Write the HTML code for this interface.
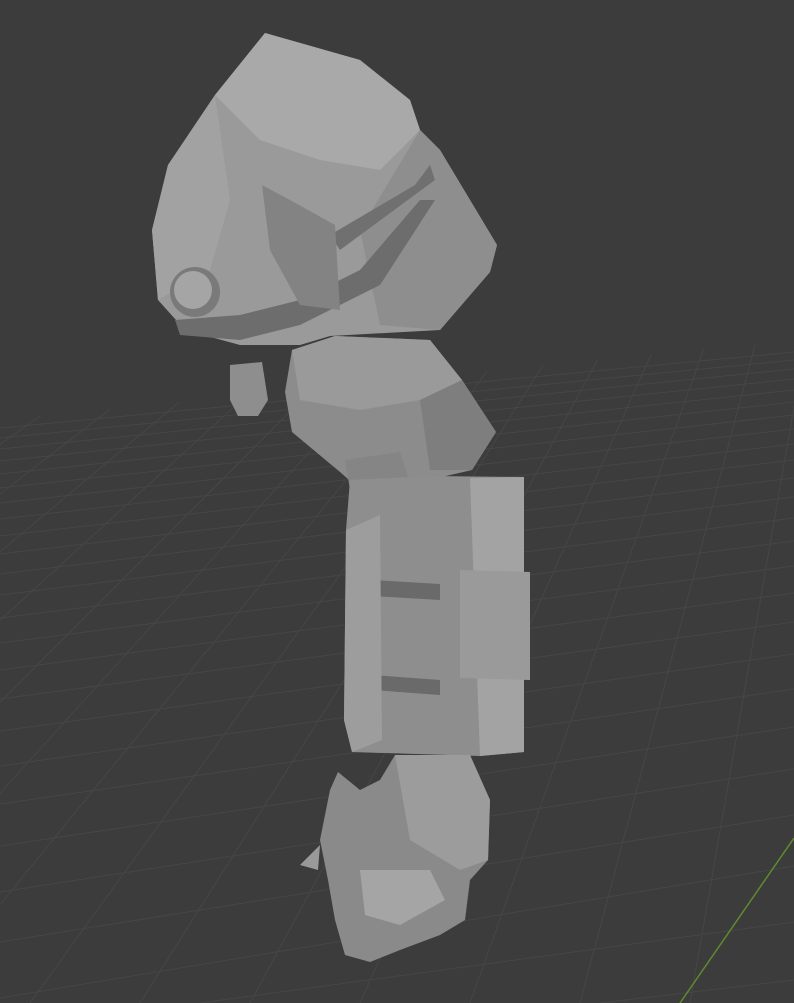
<!DOCTYPE html>
<html><head><meta charset="utf-8"><style>html,body{margin:0;padding:0;background:#3d3d3d;}svg{display:block}</style></head>
<body>
<svg width="794" height="1003" viewBox="0 0 794 1003" xmlns="http://www.w3.org/2000/svg">
<defs>
<clipPath id="floor"><polygon points="0,420 794,340 794,1003 0,1003"/></clipPath>
</defs>
<rect width="794" height="1003" fill="#3c3c3c"/>
<g clip-path="url(#floor)" stroke="#464646" stroke-width="1" fill="none">
<line x1="0" y1="428" x2="794" y2="352"/><line x1="0" y1="438" x2="794" y2="360"/>
<line x1="0" y1="449" x2="794" y2="369"/><line x1="0" y1="461" x2="794" y2="379"/>
<line x1="0" y1="474" x2="794" y2="390"/><line x1="0" y1="488" x2="794" y2="402"/>
<line x1="0" y1="503" x2="794" y2="415"/><line x1="0" y1="519" x2="794" y2="429"/>
<line x1="0" y1="536" x2="794" y2="444"/><line x1="0" y1="554" x2="794" y2="460"/>
<line x1="0" y1="574" x2="794" y2="478"/><line x1="0" y1="595" x2="794" y2="497"/>
<line x1="0" y1="618" x2="794" y2="518"/><line x1="0" y1="643" x2="794" y2="541"/>
<line x1="0" y1="670" x2="794" y2="566"/><line x1="0" y1="699" x2="794" y2="593"/>
<line x1="0" y1="731" x2="794" y2="622"/><line x1="0" y1="766" x2="794" y2="654"/>
<line x1="0" y1="804" x2="794" y2="689"/><line x1="0" y1="846" x2="794" y2="727"/>
<line x1="0" y1="892" x2="794" y2="769"/><line x1="0" y1="942" x2="794" y2="815"/>
<line x1="0" y1="998" x2="794" y2="866"/><line x1="200" y1="1003" x2="794" y2="922"/>
<line x1="600" y1="1003" x2="794" y2="980"/>
<g>
<line x1="900" y1="-200" x2="-1500" y2="1003"/><line x1="900" y1="-200" x2="-1350" y2="1003"/>
<line x1="900" y1="-200" x2="-1200" y2="1003"/><line x1="900" y1="-200" x2="-1050" y2="1003"/>
<line x1="900" y1="-200" x2="-900" y2="1003"/><line x1="900" y1="-200" x2="-780" y2="1003"/>
<line x1="900" y1="-200" x2="-660" y2="1003"/><line x1="900" y1="-200" x2="-540" y2="1003"/>
<line x1="900" y1="-200" x2="-420" y2="1003"/><line x1="900" y1="-200" x2="-300" y2="1003"/>
<line x1="900" y1="-200" x2="-190" y2="1003"/><line x1="900" y1="-200" x2="-80" y2="1003"/>
<line x1="900" y1="-200" x2="30" y2="1003"/><line x1="900" y1="-200" x2="140" y2="1003"/>
<line x1="900" y1="-200" x2="250" y2="1003"/><line x1="900" y1="-200" x2="360" y2="1003"/>
<line x1="900" y1="-200" x2="470" y2="1003"/><line x1="900" y1="-200" x2="580" y2="1003"/>
<line x1="900" y1="-200" x2="690" y2="1003"/><line x1="900" y1="-200" x2="800" y2="1003"/>
<line x1="900" y1="-200" x2="910" y2="1003"/><line x1="900" y1="-200" x2="1020" y2="1003"/>
<line x1="900" y1="-200" x2="1130" y2="1003"/><line x1="900" y1="-200" x2="1240" y2="1003"/>
<line x1="900" y1="-200" x2="1360" y2="1003"/><line x1="900" y1="-200" x2="1480" y2="1003"/>
<line x1="900" y1="-200" x2="1600" y2="1003"/><line x1="900" y1="-200" x2="1740" y2="1003"/>
<line x1="900" y1="-200" x2="1880" y2="1003"/><line x1="900" y1="-200" x2="2040" y2="1003"/>
<line x1="900" y1="-200" x2="2200" y2="1003"/><line x1="900" y1="-200" x2="2400" y2="1003"/>
</g>
</g>
<line x1="680" y1="1003" x2="794" y2="838" stroke="#5f8a2e" stroke-width="1.5"/>

<!-- stub -->
<path d="M230 365 L262 362 L268 400 L258 416 L238 416 L230 400 Z" fill="#8e8e8e"/>
<!-- upper arm -->
<path d="M292 350 L335 336 L430 340 L462 380 L496 432 L472 470 L420 482 L372 500 L340 472 L292 432 L285 392 Z" fill="#8c8c8c"/>
<path d="M335 336 L430 340 L462 380 L420 400 L360 410 L300 400 L292 350 Z" fill="#9a9a9a"/>
<path d="M420 400 L462 380 L496 432 L472 470 L430 470 Z" fill="#7e7e7e"/>
<!-- elbow -->
<path d="M345 460 L400 452 L414 496 L380 505 L350 490 Z" fill="#858585"/>
<!-- forearm -->
<path d="M350 480 L430 476 L524 477 L524 752 L480 756 L352 752 L344 720 L346 530 Z" fill="#8e8e8e"/>
<path d="M470 478 L524 477 L524 752 L480 756 Z" fill="#a3a3a3"/>
<path d="M460 570 L530 572 L530 680 L460 678 Z" fill="#9a9a9a"/>
<path d="M372 580 L440 584 L440 600 L372 596 Z M372 675 L440 680 L440 695 L372 690 Z" fill="#6a6a6a"/>
<path d="M346 530 L380 515 L382 740 L352 752 L344 720 Z" fill="#9d9d9d"/>
<!-- hand -->
<path d="M395 755 L470 755 L490 800 L488 860 L470 880 L465 920 L440 935 L400 950 L370 962 L345 955 L335 920 L328 880 L320 840 L330 790 L338 772 L360 790 L380 780 Z" fill="#8a8a8a"/>
<path d="M395 755 L470 755 L490 800 L488 860 L460 870 L410 840 Z" fill="#9c9c9c"/>
<path d="M360 870 L430 870 L445 900 L400 925 L365 915 Z" fill="#a5a5a5"/>
<path d="M300 865 L320 845 L318 870 Z" fill="#999"/>
<!-- shoulder pad -->
<path d="M265 33 L360 60 L410 100 L420 130 L440 150 L470 200 L497 245 L490 272 L440 330 L330 336 L300 345 L240 345 L185 330 L158 300 L152 230 L168 165 L215 95 Z" fill="#9a9a9a"/>
<path d="M265 33 L360 60 L410 100 L420 130 L380 170 L320 160 L260 140 L215 95 Z" fill="#a9a9a9"/>
<path d="M420 130 L440 150 L470 200 L497 245 L490 272 L440 330 L380 325 L360 230 Z" fill="#8e8e8e"/>
<path d="M152 230 L168 165 L215 95 L230 200 L210 270 L158 300 Z" fill="#a2a2a2"/>
<path d="M175 320 L240 315 L300 300 L360 270 L420 200 L435 200 L380 285 L300 325 L240 340 L180 335 Z" fill="#6d6d6d"/>
<path d="M330 235 L415 185 L430 165 L435 180 L340 250 Z" fill="#707070"/>
<path d="M262 185 L290 200 L335 225 L340 310 L300 305 L270 250 Z" fill="#838383"/>
<circle cx="195" cy="292" r="25" fill="#7a7a7a"/>
<circle cx="193" cy="290" r="19" fill="#a5a5a5"/>
</svg>
</body></html>
